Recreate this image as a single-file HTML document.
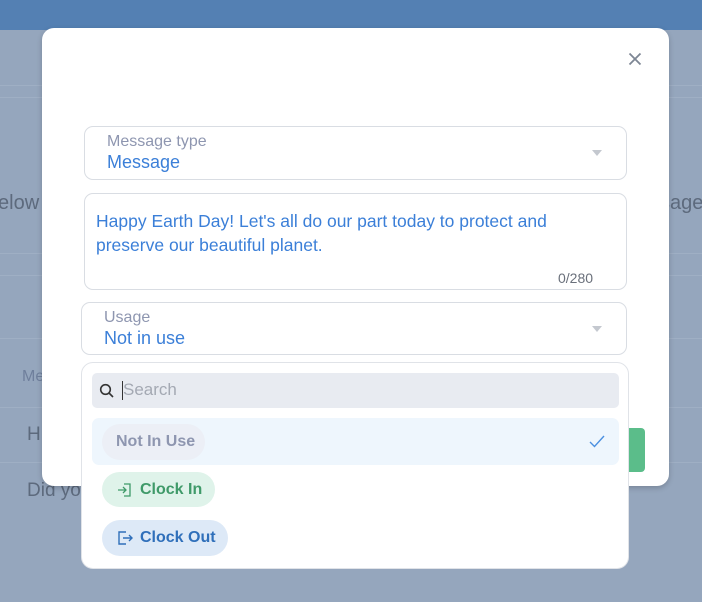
<!DOCTYPE html>
<html><head><style>
*{box-sizing:border-box;margin:0;padding:0}
body{width:702px;height:602px;overflow:hidden;background:#95a6bd;font-family:"Liberation Sans",sans-serif;position:relative}
.abs{position:absolute}
.top{left:0;top:0;width:702px;height:30px;background:#5480b3}
.line{left:0;width:702px;height:1px;background:#9fafc4}
.bgt{color:#5d6a7d;font-size:19px}
.modal{left:42px;top:28px;width:627px;height:458px;background:#fff;border-radius:12px;box-shadow:0 2px 6px rgba(0,0,0,.2)}
.box{border:1px solid #d9dde3;border-radius:9px;background:#fff}
.lab{color:#8e96b0;font-size:16px}
.val{color:#3b7fd8;font-size:18px}
.arrow{width:0;height:0;border-left:5px solid transparent;border-right:5px solid transparent;border-top:6px solid #c4c8cf}
.chip{border-radius:18px;font-size:16px;font-weight:bold;display:flex;align-items:center;padding-left:14px}
</style></head><body>
<div class="abs top"></div>
<div class="abs line" style="top:85px"></div>
<div class="abs line" style="top:97px"></div>
<div class="abs line" style="top:253px"></div>
<div class="abs line" style="top:275px"></div>
<div class="abs line" style="top:338px"></div>
<div class="abs line" style="top:407px"></div>
<div class="abs line" style="top:462px"></div>
<div class="abs bgt" style="left:-2px;top:192px;font-size:20px">elow</div>
<div class="abs bgt" style="left:660px;top:192px;font-size:20px">sage</div>
<div class="abs bgt" style="left:22px;top:368px;font-size:16px;color:#6f7f9c">Me</div>
<div class="abs bgt" style="left:27px;top:424px">Hi</div>
<div class="abs bgt" style="left:27px;top:480px">Did yo</div>
<div class="abs modal"></div>
<div class="abs" style="left:610px;top:428px;width:35px;height:44px;background:#5bbd8a;border-radius:4px"></div>
<svg class="abs" style="left:628px;top:52px" width="14" height="14" viewBox="0 0 14 14"><path d="M1.5 1.5L12.5 12.5M12.5 1.5L1.5 12.5" stroke="#7d8694" stroke-width="1.8"/></svg>
<div class="abs box" style="left:84px;top:126px;width:543px;height:54px"></div>
<div class="abs lab" style="left:107px;top:133px">Message type</div>
<div class="abs val" style="left:107px;top:152px">Message</div>
<div class="abs arrow" style="left:592px;top:150px"></div>
<div class="abs box" style="left:84px;top:193px;width:543px;height:97px"></div>
<div class="abs val" style="left:96px;top:209px;font-size:17.5px;line-height:24px">Happy Earth Day! Let's all do our part today to protect and<br>preserve our beautiful planet.</div>
<div class="abs" style="left:558px;top:270px;font-size:14px;color:#6a707b">0/280</div>
<div class="abs box" style="left:81px;top:302px;width:546px;height:53px"></div>
<div class="abs lab" style="left:104px;top:309px">Usage</div>
<div class="abs val" style="left:104px;top:328px">Not in use</div>
<div class="abs arrow" style="left:592px;top:326px"></div>
<div class="abs box" style="left:81px;top:362px;width:548px;height:207px;border-radius:12px;border-color:#e0e3e8"></div>
<div class="abs" style="left:92px;top:373px;width:527px;height:35px;background:#e8ebf1;border-radius:5px"></div>
<svg class="abs" style="left:99px;top:383px" width="16" height="16" viewBox="0 0 16 16"><circle cx="6.5" cy="6.5" r="4.8" fill="none" stroke="#333" stroke-width="1.6"/><path d="M10 10L14 14" stroke="#333" stroke-width="1.6"/></svg>
<div class="abs" style="left:122px;top:381px;width:1px;height:19px;background:#333"></div>
<div class="abs" style="left:123px;top:380px;font-size:17px;color:#a4a9b3">Search</div>
<div class="abs" style="left:92px;top:418px;width:527px;height:47px;background:#eef6fd;border-radius:7px"></div>
<div class="abs chip" style="left:102px;top:424px;width:103px;height:36px;background:#eceff6;color:#8e96b0">Not In Use</div>
<svg class="abs" style="left:588px;top:434px" width="18" height="14" viewBox="0 0 18 14"><path d="M2 8L6.5 12.5L16 2" fill="none" stroke="#4a8fe0" stroke-width="1.4"/></svg>
<div class="abs chip" style="left:102px;top:472px;width:113px;height:35px;background:#dff3ea;color:#3f9a69"><svg width="18" height="18" viewBox="0 0 18 18" style="margin-right:6px"><path d="M8 3H14V15H8M2 9H10M7 6L10 9L7 12" fill="none" stroke="#3f9a69" stroke-width="1.3"/></svg>Clock In</div>
<div class="abs chip" style="left:102px;top:520px;width:126px;height:36px;background:#dde9f7;color:#2f6fba"><svg width="18" height="18" viewBox="0 0 18 18" style="margin-right:6px"><path d="M10 3H3V15H10M7 9H16M13 6L16 9L13 12" fill="none" stroke="#2f6fba" stroke-width="1.4"/></svg>Clock Out</div>
</body></html>
